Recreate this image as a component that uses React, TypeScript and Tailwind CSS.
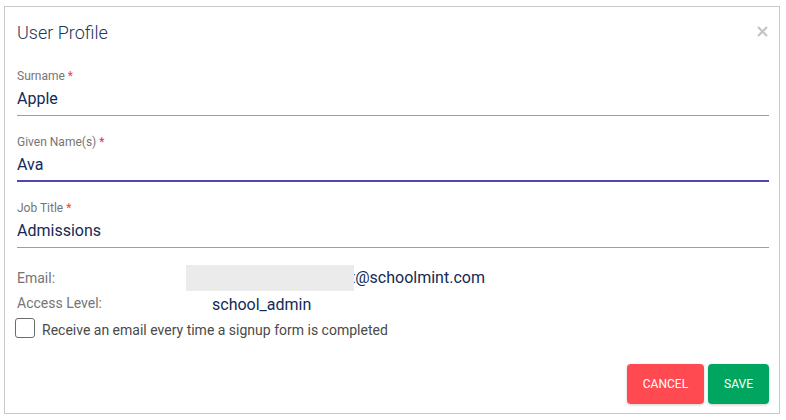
import React from "react";

interface FieldProps {
  label: string;
  value: string;
  focused?: boolean;
  starClass?: string;
}

function Field({ label, value, focused, starClass = "text-[#f44336]" }: FieldProps) {
  return (
    <div
      className={
        focused
          ? "border-b-2 border-[#4f46b5] pb-[3px]"
          : "border-b border-[#9e9e9e] pb-[4px]"
      }
    >
      <div className="h-[14px] text-[12px] leading-[14px] text-[#757575]">
        {label} <span className={starClass}>*</span>
      </div>
      <div className="mt-1 h-6 text-[16px] leading-6 text-[#132a55]">{value}</div>
    </div>
  );
}

export default function App() {
  return (
    <div className="min-h-[420px] w-[786px] bg-white pl-[4px] pt-[6px] font-['Roboto',sans-serif]">
      <div className="w-[776px] border border-[#c8c8c8] bg-white pb-[9px] pl-[12px] pr-[10px] pt-[14px]">
        <div className="flex h-6 items-center justify-between">
          <h2 className="text-[18px] font-light leading-6 text-[#22355c]">User Profile</h2>
          <button className="-mt-[3px] mr-[1px] text-[#c4c4c4]" aria-label="Close">
            <svg width="11" height="11" viewBox="0 0 11 11">
              <path d="M1 1 L10 10 M10 1 L1 10" stroke="currentColor" strokeWidth="2.2" />
            </svg>
          </button>
        </div>

        <div className="mt-6 flex flex-col gap-[19px]">
          <Field label="Surname" value="Apple" />
          <Field label="Given Name(s)" value="Ava" focused starClass="text-[#e91e63]" />
          <Field label="Job Title" value="Admissions" />
        </div>

        <div className="mt-[17px] flex h-[26px] items-center">
          <div className="w-[169px] text-[14px] leading-5 text-[#757575]">Email:</div>
          <div className="relative z-10 h-[26px] w-[168px] bg-[#ebebeb]" />
          <div className="-ml-[4px] text-[16px] leading-6 text-[#132a55]">t@schoolmint.com</div>
        </div>

        <div className="mt-[2px] flex h-6 items-start">
          <div className="w-[195px] text-[14px] leading-5 text-[#757575]">Access Level:</div>
          <div className="text-[16px] leading-6 text-[#132a55]">school_admin</div>
        </div>

        <label className="-ml-[2px] mt-[1px] flex items-start gap-[7px]">
          <span className="h-5 w-5 rounded-[3px] border border-[#6b6b6b] bg-white" />
          <span className="mt-[2px] text-[14px] leading-5 text-[#4a4a4a]">
            Receive an email every time a signup form is completed
          </span>
        </label>

        <div className="mt-6 flex justify-end gap-1">
          <button className="h-10 rounded-[4px] bg-[#ff4a52] px-4 text-[12px] uppercase text-white shadow-[0_1px_3px_rgba(0,0,0,0.2)]">
            Cancel
          </button>
          <button className="h-10 rounded-[4px] bg-[#00a65f] px-4 text-[12px] uppercase text-white shadow-[0_1px_3px_rgba(0,0,0,0.2)]">
            Save
          </button>
        </div>
      </div>
    </div>
  );
}
